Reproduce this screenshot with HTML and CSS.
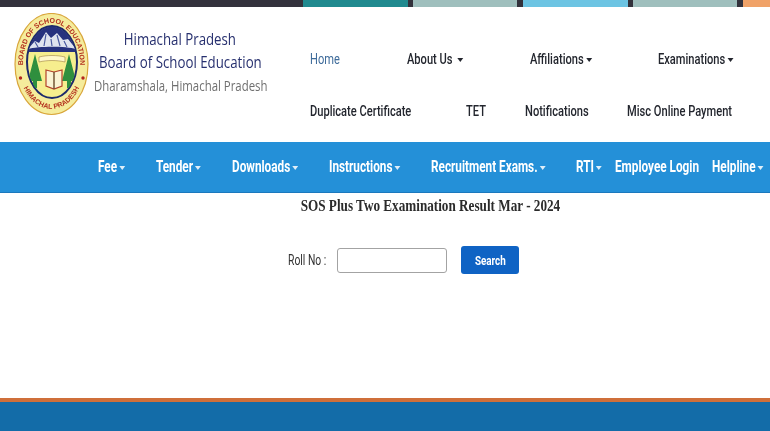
FILE: index.html
```html
<!DOCTYPE html>
<html lang="en">
<head>
<meta charset="utf-8">
<title>HPBOSE</title>
<link rel="stylesheet" href="styles.css">
</head>
<body>
<div class="topbar">
  <i class="seg dark first"></i><i class="seg teal"></i><i class="seg dark thin"></i><i class="seg pale"></i><i class="seg dark"></i><i class="seg sky"></i><i class="seg dark thin"></i><i class="seg pale"></i><i class="seg dark"></i><i class="seg orange"></i>
</div>
<header class="header">
  <svg class="logo" viewBox="0 0 76 104" width="76" height="104" aria-label="Board of School Education logo">
    <defs>
      <path id="arcTop" d="M11 66 A 28.5 41 0 1 1 64 66"/>
      <path id="arcBot" d="M7 68 A 33 45 0 0 0 68 68"/>
      <clipPath id="inner"><ellipse cx="38" cy="49" rx="24.5" ry="35.5"/></clipPath>
    </defs>
    <ellipse cx="37.5" cy="51" rx="36.5" ry="50.5" fill="#f5ec9c" stroke="#d9a63c" stroke-width="1.2"/>
    <ellipse cx="38" cy="49" rx="25" ry="36" fill="#f6ee8e" stroke="#1d2a6b" stroke-width="2"/>
    <g clip-path="url(#inner)">
      <rect x="10" y="10" width="56" height="29" fill="#27327e"/>
      <path d="M14 36 L21 28 L25 30 L32 19 L37 25 L43 20 L49 27 L54 26 L62 36 C52 33 24 33 14 36 Z" fill="#dfe3ee"/>
      <path d="M21 29 L24 34 M32 21 L30 33 M37 26 L38 33 M43 22 L46 33 M50 28 L53 34" stroke="#4a5aa0" stroke-width="1.2"/>
      <path d="M21 41 L28 68 L23 68 L23 75 L19 75 L19 68 L14 68 Z" fill="#2f8f3e"/>
      <path d="M55 41 L62 68 L57 68 L57 75 L53 75 L53 68 L48 68 Z" fill="#2f8f3e"/>
      <path d="M25 44 C33 42 43 42 51 44 L51 49 C43 47 33 47 25 49 Z" fill="#fff8c8" stroke="#8a6a30" stroke-width=".5"/>
      <path d="M32 57 L40 59 L48 57 L48 73 L40 76 L32 73 Z" fill="#fbf3d2" stroke="#b3402a" stroke-width="1.2"/>
      <path d="M40 59 V76" stroke="#6a4a2a" stroke-width="1.4"/>
    </g>
    <text class="arc"><textPath href="#arcTop" startOffset="50%" text-anchor="middle">BOARD OF SCHOOL EDUCATION</textPath></text>
    <text class="arc"><textPath href="#arcBot" startOffset="50%" text-anchor="middle">HIMACHAL PRADESH</textPath></text>
    <circle cx="6.5" cy="65" r="1.7" fill="#b3261e"/>
    <circle cx="69" cy="65" r="1.7" fill="#b3261e"/>
  </svg>
  <div class="brand">
    <div class="brand-line"><span class="t t-h">Himachal Pradesh</span></div>
    <div class="brand-line"><span class="t t-b">Board of School Education</span></div>
    <div class="brand-sub"><span class="t t-d">Dharamshala, Himachal Pradesh</span></div>
  </div>
  <nav class="menu">
    <div class="menu-row one">
      <a class="t cond home">Home</a>
      <a class="t cond">About Us <b class="caret dk"></b></a>
      <a class="t cond">Affiliations<b class="caret dk"></b></a>
      <a class="t cond">Examinations<b class="caret dk"></b></a>
    </div>
    <div class="menu-row two">
      <a class="t cond">Duplicate Certificate</a>
      <a class="t cond">TET</a>
      <a class="t cond">Notifications</a>
      <a class="t cond">Misc Online Payment</a>
    </div>
  </nav>
</header>
<nav class="bluebar">
  <a class="t bl">Fee<b class="caret"></b></a>
  <a class="t bl">Tender<b class="caret"></b></a>
  <a class="t bl">Downloads<b class="caret"></b></a>
  <a class="t bl">Instructions<b class="caret"></b></a>
  <a class="t bl">Recruitment Exams.<b class="caret"></b></a>
  <a class="t bl">RTI<b class="caret"></b></a>
  <a class="t bl">Employee Login</a>
  <a class="t bl">Helpline<b class="caret"></b></a>
</nav>
<main class="main">
  <h1 class="title"><span class="t title-t">SOS Plus Two Examination Result Mar - 2024</span></h1>
  <form class="search">
    <label class="t roll" for="roll">Roll No :</label>
    <input class="roll-input" id="roll" type="text">
    <button class="btn" type="button"><span class="t btn-t">Search</span></button>
  </form>
</main>
<footer class="footer"></footer>
</body>
</html>
```
FILE: styles.css
```css
* { box-sizing: border-box; }
html, body { margin: 0; padding: 0; }
body { width: 770px; height: 431px; overflow: hidden; background: #fff; font-family: Roboto, sans-serif; color: #23262e; }

.topbar { display: flex; height: 7px; background: #2f3039; }
.seg { display: block; flex: none; }
.dark { width: 6px; background: #33323c; }
.thin { width: 5px; }
.first { width: 303px; }
.teal { width: 105px; background: #208a8f; }
.pale { width: 104px; background: #9fbfbd; }
.sky { width: 105px; background: #6cc4e3; }
.orange { flex: 1; background: #f0a268; }

.t { display: inline-block; transform-origin: left center; white-space: nowrap; }

.header { display: flex; height: 135px; }
.logo { flex: none; margin: 6px 0 0 14px; filter: blur(.4px); }
.arc { font: 700 7px "Liberation Sans", sans-serif; fill: #b3301e; }
.brand { flex: none; width: 172px; margin-left: 4px; padding-top: 20px; font-family: "Open Sans", sans-serif; }
.brand-line { height: 23px; line-height: 24px; font-size: 17px; color: #27306f; text-align: center; white-space: nowrap; display: flex; justify-content: center; }
.t-h, .t-b { flex: none; transform: scaleX(.78); transform-origin: center; font-weight: 500; }
.brand-sub { height: 24px; line-height: 24px; font-size: 15px; color: #6f6f6f; }
.t-d { transform: scaleX(.76); }

.menu { flex: none; margin-left: 44px; padding-top: 43px; }
.menu-row { display: grid; height: 52px; font-size: 15px; }
.one { grid-template-columns: 97px 123px 128px 1fr; }
.two { grid-template-columns: 156px 59px 102px 1fr; }
.cond { transform: scaleX(.74); color: #23262e; font-weight: 500; }
.home { color: #3f6c9b; font-weight: 400; }

.caret { display: inline-block; width: 0; height: 0; margin-left: 3px; vertical-align: 2px; border-top: 4px solid currentColor; border-left: 4px solid transparent; border-right: 4px solid transparent; }

.bluebar { display: grid; grid-template-columns: 58px 76px 97px 102px 145px 39px 97px 1fr; height: 51px; padding-left: 98px; padding-bottom: 2px; align-items: center; background: #2490d8; border-bottom: 1px solid #1b78bd; }
.bl { transform: scaleX(.735); font-size: 16px; font-weight: 700; color: #fff; }
.bl .caret { opacity: .85; }

.main { height: 205px; }
.title { margin: 0; padding: 4px 0 0 90px; height: 53px; text-align: center; font: 700 17px/18px "Liberation Serif", serif; color: #2b2b2b; }
.title-t { transform: scaleX(.775); transform-origin: center; }

.search { display: flex; align-items: center; padding-left: 288px; height: 28px; }
.roll { width: 49px; font-size: 14px; transform: scaleX(.74); color: #333; }
.roll-input { width: 110px; height: 25px; padding: 0; border: 1px solid #a3a3a3; border-radius: 3px; background: #fff; }
.btn { width: 58px; height: 28px; margin-left: 14px; padding: 0; border: 0; border-radius: 3px; background: #0f63c4; color: #fff; font-family: Roboto, sans-serif; font-size: 13px; font-weight: 700; }
.btn-t { transform: scaleX(.76); transform-origin: center; }

.footer { height: 33px; background: #136ca8; border-top: 4px solid #cf6f3a; }
```
